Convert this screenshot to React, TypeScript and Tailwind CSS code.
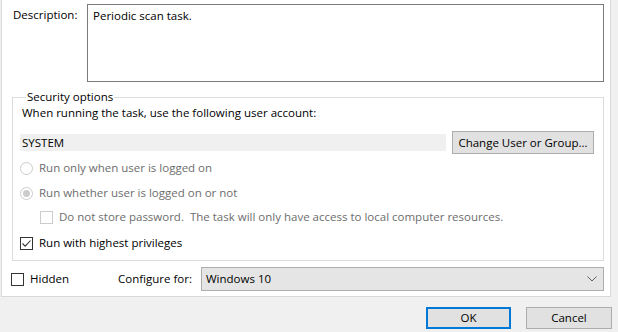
import React from 'react';

const FONT = { fontFamily: '"Open Sans", "Noto Sans", sans-serif' };

function Radio({ checked, disabled, label }: { checked?: boolean; disabled?: boolean; label: string }) {
  return (
    <div className="flex items-center h-[16px]">
      <div
        className={`w-[13px] h-[13px] rounded-full border flex items-center justify-center ${
          disabled ? 'border-[#cccccc]' : 'border-[#333333]'
        }`}
      >
        {checked && <div className={`w-[7px] h-[7px] rounded-full ${disabled ? 'bg-[#cccccc]' : 'bg-[#333333]'}`} />}
      </div>
      <span className={`ml-[6px] whitespace-pre ${disabled ? 'text-[#6d6d6d]' : 'text-black'}`}>{label}</span>
    </div>
  );
}

function Check({ checked, disabled, label }: { checked?: boolean; disabled?: boolean; label: string }) {
  return (
    <div className="flex items-center h-[16px]">
      <div
        className={`w-[13px] h-[13px] border flex items-center justify-center bg-white ${
          disabled ? 'border-[#cccccc]' : 'border-[#333333]'
        }`}
      >
        {checked && (
          <svg width="11" height="11" viewBox="0 0 11 11">
            <path d="M1.5 5.5 L4.2 8.2 L9.5 2.5" fill="none" stroke="#333333" strokeWidth="1.1" />
          </svg>
        )}
      </div>
      <span className={`ml-[6px] whitespace-pre ${disabled ? 'text-[#6d6d6d]' : 'text-black'}`}>{label}</span>
    </div>
  );
}

export default function App() {
  return (
    <div className="w-[618px] h-[332px] bg-[#f0f0f0] text-[11.5px] leading-[16px] text-black overflow-hidden" style={FONT}>
      {/* Tab page */}
      <div className="ml-[1px] w-[610px] h-[297px] bg-white border-l border-r border-b border-[#d9d9d9]">
        {/* Description */}
        <div className="flex items-start pt-[4px] pl-[11px]">
          <div className="w-[74px] pt-[3px]">Description:</div>
          <div className="w-[517px] h-[78px] border border-[#7a7a7a] px-[5px] pt-[3px]">Periodic scan task.</div>
        </div>

        {/* Security options */}
        <fieldset className="mt-[7px] ml-[10px] w-[592px] border border-[#dcdcdc] px-[7px] pb-[9px]">
          <legend className="ml-[6px] px-[1px]">Security options</legend>
          <div className="pl-[2px]">When running the task, use the following user account:</div>
          <div className="flex items-center mt-[10px] h-[23px]">
            <div className="w-[426px] h-[17px] bg-[#f0f0f0] pl-[2px] flex items-center">SYSTEM</div>
            <button className="ml-[6px] w-[142px] h-[23px] bg-[#e1e1e1] border border-[#adadad] text-center">
              Change User or Group...
            </button>
          </div>
          <div className="mt-[6px]">
            <Radio disabled label="Run only when user is logged on" />
          </div>
          <div className="mt-[9px]">
            <Radio disabled checked label="Run whether user is logged on or not" />
          </div>
          <div className="mt-[8px] pl-[20px]">
            <Check disabled label="Do not store password.  The task will only have access to local computer resources." />
          </div>
          <div className="mt-[10px]">
            <Check checked label="Run with highest privileges" />
          </div>
        </fieldset>

        {/* Hidden / configure */}
        <div className="flex items-center mt-[6px] h-[24px] pl-[9px]">
          <div className="w-[107px]">
            <Check label="Hidden" />
          </div>
          <div className="w-[83px]">Configure for:</div>
          <div className="w-[403px] h-[24px] bg-[#e5e5e5] border border-[#adadad] flex items-center justify-between pl-[4px] pr-[6px]">
            <span>Windows 10</span>
            <svg width="10" height="6" viewBox="0 0 10 6">
              <path d="M0.5 0.5 L5 5 L9.5 0.5" fill="none" stroke="#606060" strokeWidth="1" />
            </svg>
          </div>
        </div>
      </div>

      {/* Dialog buttons */}
      <div className="flex justify-end gap-[15px] mt-[10px] pr-[6px]">
        <button className="w-[85px] h-[22px] bg-[#e1e1e1] border-2 border-[#0078d7] text-center">OK</button>
        <button className="w-[86px] h-[22px] bg-[#e1e1e1] border border-[#adadad] text-center">Cancel</button>
      </div>
    </div>
  );
}
